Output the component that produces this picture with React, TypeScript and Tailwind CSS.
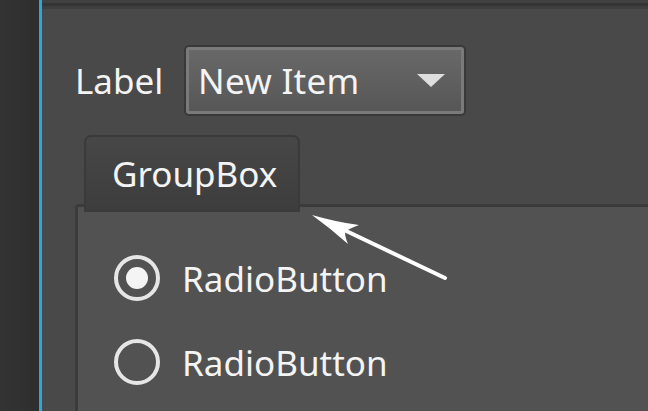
export default function App() {
  const font = { fontFamily: '"Noto Sans", "Open Sans", sans-serif' };

  return (
    <div className="relative flex h-[411px] w-[648px] overflow-hidden bg-[#494949] text-[#f4f4f4]" style={font}>
      {/* left dock strip */}
      <div className="w-[39px] shrink-0 bg-gradient-to-r from-[#333333] to-[#2e2e2e]" />
      <div className="w-[3px] shrink-0 bg-[#2ba6e0]" />

      <div className="flex min-w-0 flex-1 flex-col">
        {/* top edge */}
        <div className="h-[3px] bg-[#404040]" />
        <div className="h-[3px] bg-[#353535]" />
        <div className="h-[3px] bg-[#3f3f3f]" />

        <div className="flex flex-1 flex-col pl-[33px]">
          {/* label + combo */}
          <div className="mt-[36px] flex items-center">
            <div className="w-[109px] text-[35px] leading-none">Label</div>
            <div className="h-[71px] w-[282px] rounded-[5px] border-[2px] border-[#393939]">
              <div className="flex h-full items-center justify-between rounded-[3px] border-[3px] border-[#7a7a7a] bg-gradient-to-b from-[#686868] to-[#575757] pl-[9px] pr-[16px]">
                <span className="text-[35px] leading-none tracking-[0.3px]">New Item</span>
                <svg width="28" height="13" viewBox="0 0 28 13">
                  <polygon points="0,0 28,0 14,13" fill="#dedede" />
                </svg>
              </div>
            </div>
          </div>

          {/* group box */}
          <div className="mt-[19px] flex flex-1 flex-col">
            <div className="relative z-10 -mb-[8px] ml-[9px] flex h-[77px] w-[216px] items-center rounded-t-[7px] border-[2px] border-[#3a3a3a] bg-gradient-to-b from-[#474747] to-[#3d3d3d] pl-[26px]">
              <span className="text-[35px] leading-none">GroupBox</span>
            </div>
            <div className="flex flex-1 flex-col rounded-tl-[4px] border-l-[3px] border-t-[3px] border-[#3b3b3b] bg-[#525252] pl-[36px] pt-[48px]">
              <div className="flex items-center gap-[22px]">
                <div className="flex h-[46px] w-[46px] items-center justify-center rounded-full border-[4px] border-[#e6e6e6]">
                  <div className="h-[22px] w-[22px] rounded-full bg-[#f4f4f4]" />
                </div>
                <span className="text-[35px] leading-none">RadioButton</span>
              </div>
              <div className="mt-[38px] flex items-center gap-[22px]">
                <div className="h-[46px] w-[46px] rounded-full border-[4px] border-[#e6e6e6]" />
                <span className="text-[35px] leading-none">RadioButton</span>
              </div>
            </div>
          </div>
        </div>
      </div>

      {/* annotation arrow */}
      <svg className="pointer-events-none absolute left-0 top-0" width="648" height="411" viewBox="0 0 648 411">
        <line x1="445" y1="278" x2="340" y2="228" stroke="#ffffff" strokeWidth="4" strokeLinecap="round" />
        <path d="M312 215 Q336 222 359 225 Q348 229 345 232 Q345 237 348 244 Q330 228 312 215 Z" fill="#ffffff" />
      </svg>
    </div>
  );
}
